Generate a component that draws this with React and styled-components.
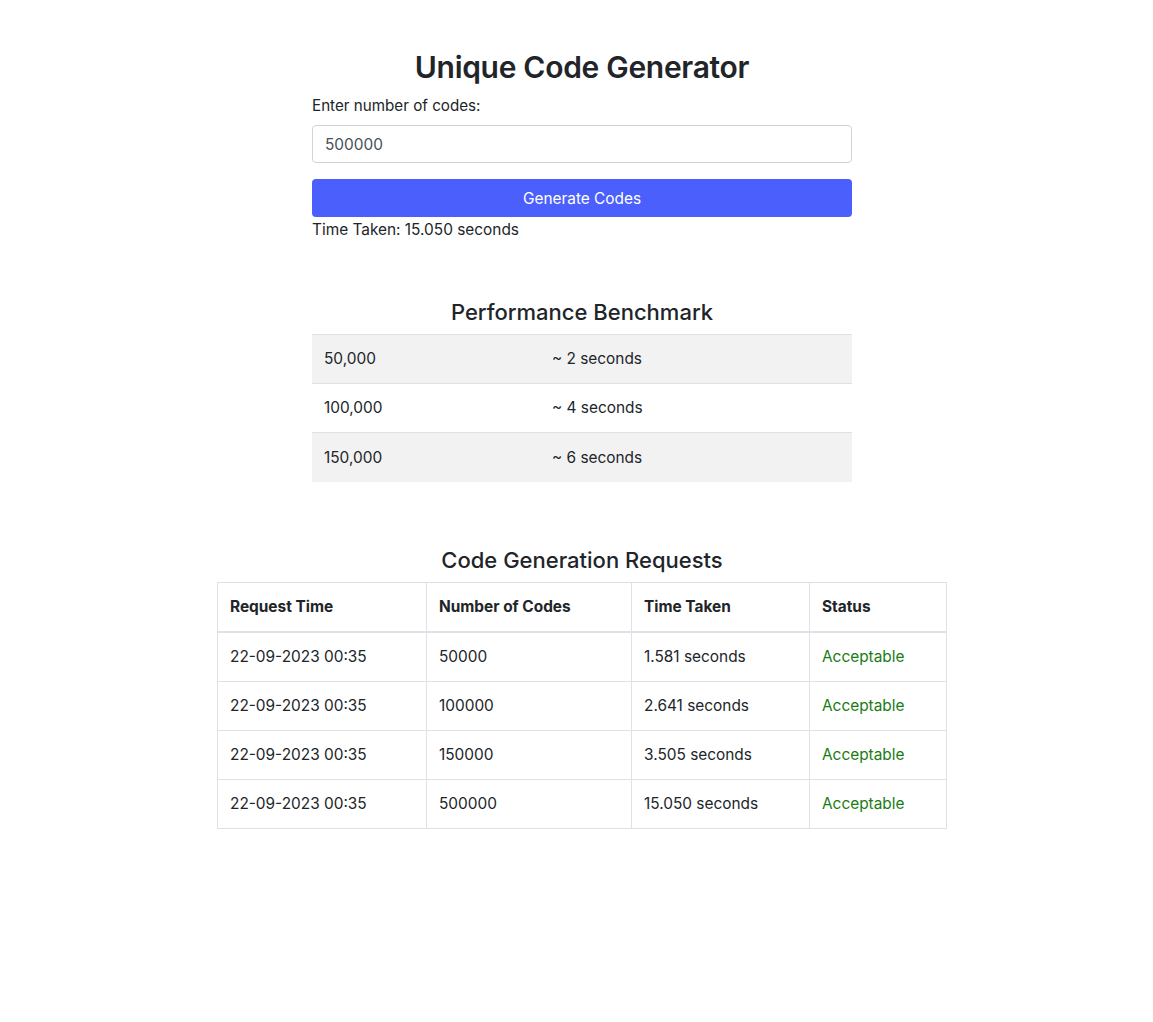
import React from "react";
import styled, { createGlobalStyle } from "styled-components";

const Global = createGlobalStyle`
  html, body { margin: 0; padding: 0; background: #fff; }
  body {
    font-family: Inter, "Noto Sans", sans-serif;
    font-size: 15.4px;
    line-height: 1.5;
    color: #212529;
  }
  * { box-sizing: border-box; }
`;

const Page = styled.div`
  display: flex;
  flex-direction: column;
  align-items: center;
  padding: 48px 0 0 11px;
`;

const Form = styled.section`
  width: 540px;
  display: flex;
  flex-direction: column;
`;

const Title = styled.h1`
  margin: 0;
  font-size: 30px;
  font-weight: 600;
  line-height: 38px;
  text-align: center;
  letter-spacing: -0.3px;
`;

const Label = styled.label`
  display: block;
  margin: 9px 0 8px;
  font-size: 15.2px;
  line-height: 22px;
`;

const Input = styled.input`
  width: 100%;
  height: 38px;
  padding: 6px 12px;
  border: 1px solid #ced4da;
  border-radius: 4px;
  font-family: inherit;
  font-size: 15.4px;
  color: #495057;
  outline: none;
`;

const Button = styled.button`
  margin-top: 16px;
  width: 100%;
  height: 38px;
  border: none;
  border-radius: 4px;
  background: #4a5ffb;
  color: #fff;
  font-family: inherit;
  font-size: 15.4px;
  cursor: pointer;
`;

const Result = styled.div`
  margin-top: 1px;
  line-height: 24px;
`;

const Section = styled.section`
  width: ${(p) => p.$width}px;
  margin-top: ${(p) => p.$top}px;
  display: flex;
  flex-direction: column;
`;

const SubTitle = styled.h2`
  margin: 0 0 7px;
  font-size: 22px;
  font-weight: 500;
  line-height: 30px;
  text-align: center;
`;

const Table = styled.table`
  width: 100%;
  border-collapse: collapse;
  table-layout: fixed;
`;

const Row = styled.tr`
  background: ${(p) => (p.$striped ? "#f2f2f2" : "#fff")};
`;

const Cell = styled.td`
  height: 49px;
  padding: 0 12px;
  border-top: 1px solid #dee2e6;
  vertical-align: middle;
`;

const GridCell = styled.td`
  height: 49px;
  padding: 0 12px;
  border: 1px solid #dee2e6;
  vertical-align: middle;
  color: ${(p) => (p.$ok ? "#187c12" : "#212529")};
`;

const HeadCell = styled.th`
  height: 50px;
  padding: 0 12px;
  border: 1px solid #dee2e6;
  border-bottom: 2px solid #dee2e6;
  text-align: left;
  vertical-align: middle;
  font-weight: 700;
  font-size: 15.4px;
`;

const bench = [
  ["50,000", "~ 2 seconds"],
  ["100,000", "~ 4 seconds"],
  ["150,000", "~ 6 seconds"],
];

const requests = [
  ["22-09-2023 00:35", "50000", "1.581 seconds"],
  ["22-09-2023 00:35", "100000", "2.641 seconds"],
  ["22-09-2023 00:35", "150000", "3.505 seconds"],
  ["22-09-2023 00:35", "500000", "15.050 seconds"],
];

export default function App() {
  return (
    <>
      <Global />
      <Page>
        <Form>
          <Title>Unique Code Generator</Title>
          <Label htmlFor="count">Enter number of codes:</Label>
          <Input id="count" type="text" defaultValue="500000" />
          <Button>Generate Codes</Button>
          <Result>Time Taken: 15.050 seconds</Result>
        </Form>

        <Section $width={540} $top={55}>
          <SubTitle>Performance Benchmark</SubTitle>
          <Table>
            <colgroup>
              <col style={{ width: 228 }} />
              <col />
            </colgroup>
            <tbody>
              {bench.map(([n, t], i) => (
                <Row key={n} $striped={i % 2 === 0}>
                  <Cell>{n}</Cell>
                  <Cell>{t}</Cell>
                </Row>
              ))}
            </tbody>
          </Table>
        </Section>

        <Section $width={730} $top={63}>
          <SubTitle>Code Generation Requests</SubTitle>
          <Table>
            <colgroup>
              <col style={{ width: 209 }} />
              <col style={{ width: 205 }} />
              <col style={{ width: 178 }} />
              <col />
            </colgroup>
            <thead>
              <tr>
                <HeadCell>Request Time</HeadCell>
                <HeadCell>Number of Codes</HeadCell>
                <HeadCell>Time Taken</HeadCell>
                <HeadCell>Status</HeadCell>
              </tr>
            </thead>
            <tbody>
              {requests.map(([d, n, t]) => (
                <tr key={n}>
                  <GridCell>{d}</GridCell>
                  <GridCell>{n}</GridCell>
                  <GridCell>{t}</GridCell>
                  <GridCell $ok>Acceptable</GridCell>
                </tr>
              ))}
            </tbody>
          </Table>
        </Section>
      </Page>
    </>
  );
}
